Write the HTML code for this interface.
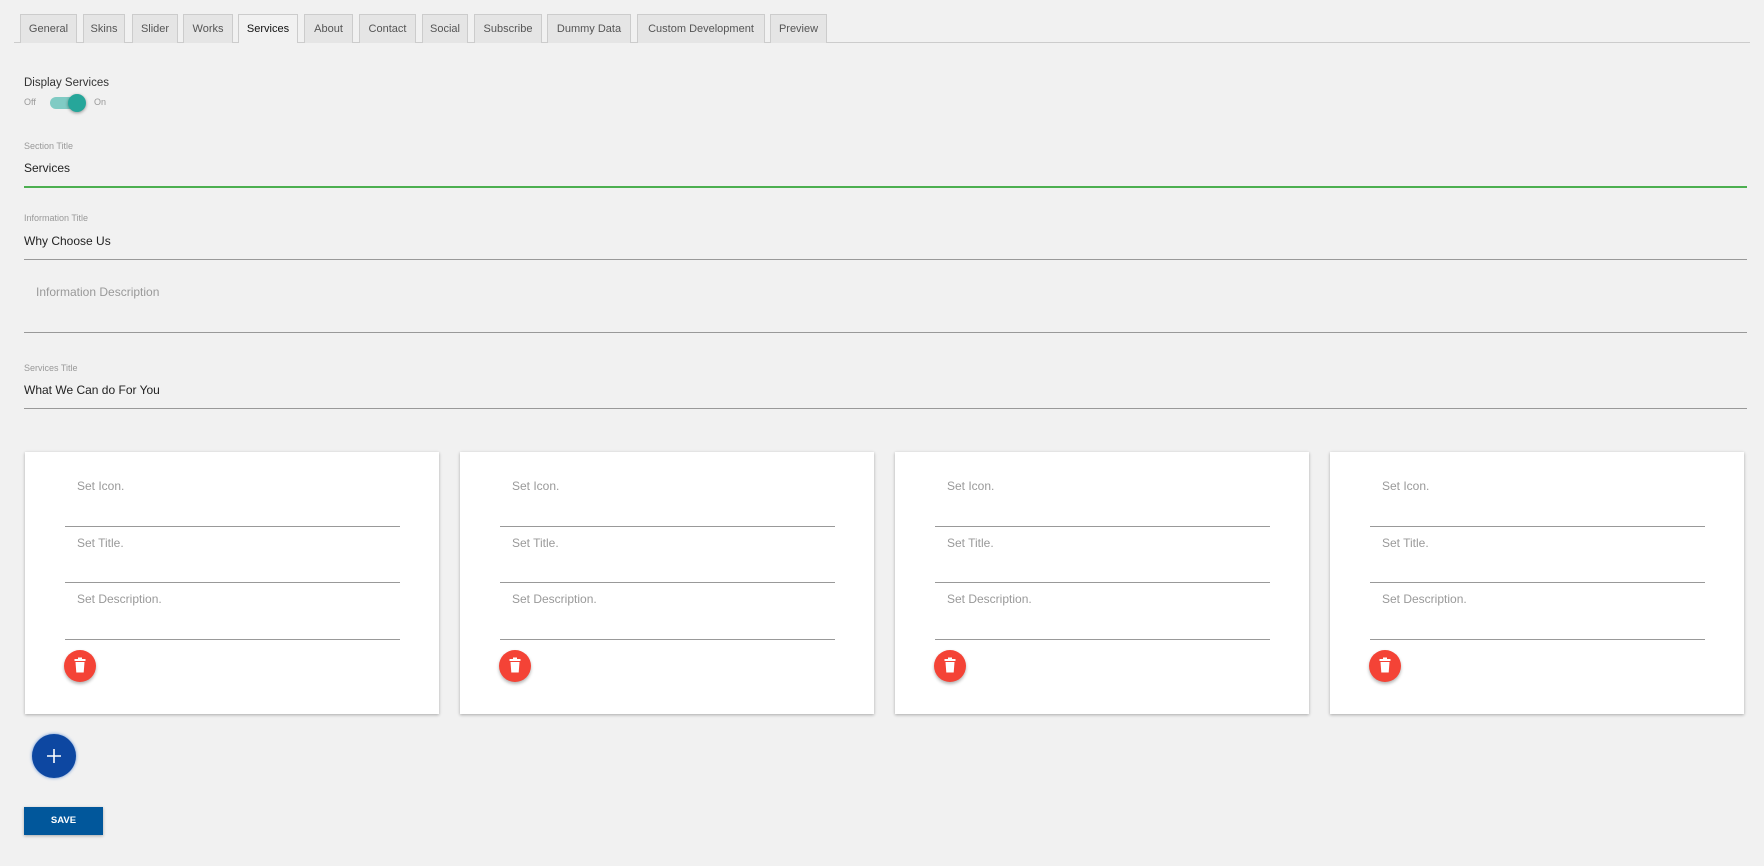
<!DOCTYPE html>
<html><head><meta charset="utf-8"><style>
*{box-sizing:border-box;margin:0;padding:0}
body{width:1764px;height:866px;background:#f1f1f1;font-family:"Liberation Sans",sans-serif;position:relative;overflow:hidden;color:#222}
.abs{position:absolute}
.tab{position:absolute;top:14px;height:29px;background:#e5e5e5;border:1px solid #ccc;border-bottom:none;font-size:11px;color:#555;text-align:center;line-height:28px;white-space:nowrap}
.tab.act{background:#f1f1f1;color:#111;height:29px}
.lbl{position:absolute;left:24px;font-size:9px;color:#999}
.val{position:absolute;left:24px;font-size:12px;color:#222}
.line{position:absolute;left:24px;width:1723px;height:1px;background:#999}
.card{position:absolute;top:452px;width:414px;height:262px;background:#fff;box-shadow:0 1px 3px rgba(0,0,0,.3)}
.card .l{position:absolute;left:40px;width:335px;height:1px;background:#999}
.card .t{position:absolute;left:52px;font-size:12px;color:#999}
.del{position:absolute;left:39px;top:198px;width:32px;height:32px;border-radius:50%;background:#f44336;box-shadow:0 2px 3px rgba(0,0,0,.3)}
</style></head><body>
<div class="abs" style="left:14px;top:42px;width:1736px;height:1px;background:#ccc"></div>
<div class="tab" style="left:20px;width:57px">General</div>
<div class="tab" style="left:83px;width:42px">Skins</div>
<div class="tab" style="left:132px;width:46px">Slider</div>
<div class="tab" style="left:183px;width:50px">Works</div>
<div class="tab act" style="left:238px;width:60px">Services</div>
<div class="tab" style="left:304px;width:49px">About</div>
<div class="tab" style="left:359px;width:57px">Contact</div>
<div class="tab" style="left:422px;width:46px">Social</div>
<div class="tab" style="left:474px;width:68px">Subscribe</div>
<div class="tab" style="left:547px;width:84px">Dummy Data</div>
<div class="tab" style="left:637px;width:128px">Custom Development</div>
<div class="tab" style="left:770px;width:57px">Preview</div>

<div class="abs" style="left:24px;top:77px;font-size:11.5px;color:#333">Display Services</div>
<div class="abs" style="left:24px;top:97px;font-size:9px;color:#999">Off</div>
<div class="abs" style="left:50px;top:97px;width:34px;height:12px;border-radius:6px;background:#80cbc4"></div>
<div class="abs" style="left:68px;top:94px;width:18px;height:18px;border-radius:50%;background:#26a69a;box-shadow:0 1px 3px rgba(0,0,0,.4)"></div>
<div class="abs" style="left:94px;top:97px;font-size:9px;color:#999">On</div>

<div class="lbl" style="top:141px">Section Title</div>
<div class="val" style="top:161px">Services</div>
<div class="abs" style="left:24px;top:186px;width:1723px;height:2px;background:#4caf50"></div>

<div class="lbl" style="top:213px">Information Title</div>
<div class="val" style="top:234px">Why Choose Us</div>
<div class="line" style="top:259px"></div>

<div class="abs" style="left:36px;top:285px;font-size:12px;color:#999">Information Description</div>
<div class="line" style="top:332px"></div>

<div class="lbl" style="top:363px">Services Title</div>
<div class="val" style="top:383px">What We Can do For You</div>
<div class="line" style="top:408px"></div>

<div class="card" style="left:25px"><div class="t" style="top:27px">Set Icon.</div><div class="l" style="top:74px"></div><div class="t" style="top:84px">Set Title.</div><div class="l" style="top:130px"></div><div class="t" style="top:140px">Set Description.</div><div class="l" style="top:187px"></div><div class="del"><svg width="32" height="32" viewBox="0 0 32 32"><rect x="10.5" y="9" width="11" height="2" fill="#fff"/><rect x="14" y="7.5" width="4" height="2" fill="#fff"/><path d="M11.5 12h9l-.8 10.5h-7.4z" fill="#fff"/></svg></div></div>
<div class="card" style="left:460px"><div class="t" style="top:27px">Set Icon.</div><div class="l" style="top:74px"></div><div class="t" style="top:84px">Set Title.</div><div class="l" style="top:130px"></div><div class="t" style="top:140px">Set Description.</div><div class="l" style="top:187px"></div><div class="del"><svg width="32" height="32" viewBox="0 0 32 32"><rect x="10.5" y="9" width="11" height="2" fill="#fff"/><rect x="14" y="7.5" width="4" height="2" fill="#fff"/><path d="M11.5 12h9l-.8 10.5h-7.4z" fill="#fff"/></svg></div></div>
<div class="card" style="left:895px"><div class="t" style="top:27px">Set Icon.</div><div class="l" style="top:74px"></div><div class="t" style="top:84px">Set Title.</div><div class="l" style="top:130px"></div><div class="t" style="top:140px">Set Description.</div><div class="l" style="top:187px"></div><div class="del"><svg width="32" height="32" viewBox="0 0 32 32"><rect x="10.5" y="9" width="11" height="2" fill="#fff"/><rect x="14" y="7.5" width="4" height="2" fill="#fff"/><path d="M11.5 12h9l-.8 10.5h-7.4z" fill="#fff"/></svg></div></div>
<div class="card" style="left:1330px"><div class="t" style="top:27px">Set Icon.</div><div class="l" style="top:74px"></div><div class="t" style="top:84px">Set Title.</div><div class="l" style="top:130px"></div><div class="t" style="top:140px">Set Description.</div><div class="l" style="top:187px"></div><div class="del"><svg width="32" height="32" viewBox="0 0 32 32"><rect x="10.5" y="9" width="11" height="2" fill="#fff"/><rect x="14" y="7.5" width="4" height="2" fill="#fff"/><path d="M11.5 12h9l-.8 10.5h-7.4z" fill="#fff"/></svg></div></div>

<div class="abs" style="left:32px;top:734px;width:44px;height:44px;border-radius:50%;background:#0d47a1;box-shadow:0 0 3px rgba(30,100,200,.7)"><svg width="44" height="44"><path d="M22 15v14M15 22h14" stroke="#fff" stroke-width="1.6"/></svg></div>

<div class="abs" style="left:24px;top:807px;width:79px;height:28px;background:#01579b;box-shadow:0 1px 3px rgba(0,0,0,.3);color:#fff;font-size:9.5px;font-weight:bold;text-align:center;line-height:28px">SAVE</div>
</body></html>
